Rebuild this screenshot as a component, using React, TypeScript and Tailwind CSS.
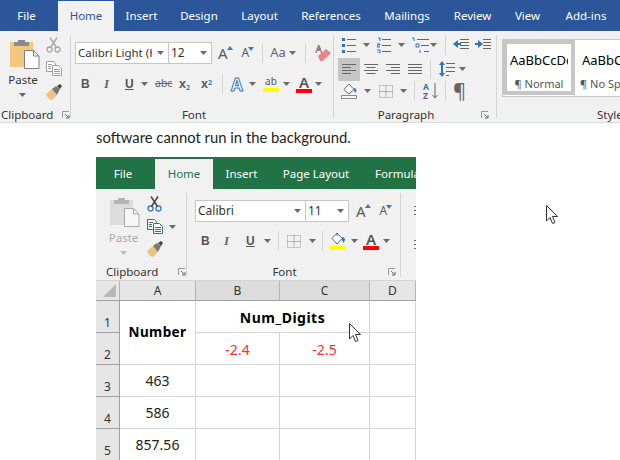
import React from "react";

type C = { className?: string };
const Caret = ({ className = "" }: C) => (
  <svg width="7" height="4" className={"shrink-0 " + className}><path d="M0 0h7L3.5 4z" fill="#6a6a6a" /></svg>
);
const Launcher = ({ className = "" }: C) => (
  <svg width="8" height="8" className={"shrink-0 " + className} fill="none">
    <path d="M.5 7V.5H7" stroke="#999" />
    <path d="M3 3l3.5 3.5M7 4v3H4" stroke="#666" />
  </svg>
);
const Sep = ({ className = "" }: C) => <div className={"w-px bg-[#d4d4d4] shrink-0 " + className} />;

const ClipIcon = ({ gray = false }: { gray?: boolean }) => (
  <svg width="30" height="30" className="block">
    <path d="M0 3h23v25H0z" fill={gray ? "#dcdcdc" : "#f0c880"} />
    <path d="M8 3V1h7v2h4v4H4V3z" fill={gray ? "#b4b4b4" : "#8a8a8a"} />
    <path d="M14.5 11.5h9l5.500 5.500V29.500h-14.500z" fill={gray ? "#f6f6f6" : "#fff"} stroke={gray ? "#a8a8a8" : "#808080"} />
    <path d="M23.500 11.500v5.500h5.500" fill="none" stroke={gray ? "#a8a8a8" : "#808080"} />
  </svg>
);
const Scissors = ({ color }: { color: string }) => (
  <svg width="15" height="16" fill="none" className="block">
    <circle cx="3.500" cy="12.500" r="2.500" stroke={color} strokeWidth="1.300" />
    <circle cx="11.500" cy="12.500" r="2.500" stroke={color} strokeWidth="1.300" />
    <path d="M4.500 10.500L11 .5M10.500 10.500L4 .5" stroke={color === "#3b79b8" ? "#444" : "#aaa"} strokeWidth="1.500" />
  </svg>
);
const Copy = ({ color = "#777" }: { color?: string }) => (
  <svg width="16" height="15" fill="none" className="block">
    <path d="M.5.5h7l2 2v8h-9z" fill="#fff" stroke={color} />
    <path d="M6.500 4.500h6l3 3v7h-9z" fill="#fff" stroke={color} />
    <path d="M8 8.500h6M8 10.500h6M8 12.500h6M2 3.500h4M2 5.500h3M2 7.500h3" stroke={color} />
  </svg>
);
const Brush = () => (
  <svg width="16" height="16" className="block">
    <path d="M0 10l6-5 5 6-5 5c-2 0-5-3-6-6z" fill="#edc27d" />
    <path d="M6 5l4-3 4 3-3 6z" fill="#777" />
    <path d="M11 2l3-2 2 2-2 3z" fill="#444" />
  </svg>
);
const Lines = ({ kind }: { kind: "l" | "c" | "r" | "j" }) => {
  const d = {
    l: "M0 .5h14M0 3.500h9M0 6.500h14M0 9.500h9",
    c: "M0 .5h14M2.500 3.500h9M0 6.500h14M2.500 9.500h9",
    r: "M0 .5h14M5 3.500h9M0 6.500h14M5 9.500h9",
    j: "M0 .5h14M0 3.500h14M0 6.500h14M0 9.500h14",
  }[kind];
  return <svg width="14" height="10" className="block shrink-0"><path d={d} stroke="#666" /></svg>;
};
const Borders = () => (
  <svg width="14" height="13" className="block shrink-0" fill="none">
    <path d="M.5.5h13M.5 12.500h13M.5.5v12M13.500.5v12" stroke="#999" strokeDasharray="1 1" />
    <path d="M7 .5v12M.5 6.500h13" stroke="#777" strokeDasharray="1 1" />
  </svg>
);
const Fill = ({ bar }: { bar: string }) => (
  <div className="flex flex-col items-center shrink-0 w-[16px]">
    <svg width="16" height="13" className="block">
      <path d="M7 1L2 6.500 7 12l5-5.500z" fill="#fff" stroke="#666" />
      <path d="M7 1V4" stroke="#666" />
      <path d="M12 5c2 0 3 1 3 3l-1.500 3L12 8z" fill="#3b79b8" />
    </svg>
    <div className={"w-[16px] h-[4px] mt-px " + bar} />
  </div>
);
const BigA = ({ dir, size }: { dir: "up" | "down"; size: string }) => (
  <div className="flex items-start shrink-0">
    <span className={"leading-none text-[#5a5a5a] " + size}>A</span>
    <svg width="6" height="4" className="-ml-px">
      <path d={dir === "up" ? "M0 4h6L3 0z" : "M0 0h6L3 4z"} fill="#3b79b8" />
    </svg>
  </div>
);
const ColorA = () => (
  <div className="flex flex-col items-center shrink-0 w-[16px]">
    <span className="text-[15px] leading-[14px] font-semibold text-[#555]">A</span>
    <div className="w-[16px] h-[4px] bg-[#ff0000]" />
  </div>
);
const Cursor = ({ className = "" }: C) => (
  <svg width="13" height="20" className={"absolute " + className}>
    <path d="M.5.5v15.500l3.500-3.500 2.500 6 2.500-1-2.500-6h5z" fill="#fff" stroke="#333" />
  </svg>
);
const Tab = ({ w, label, active, color }: { w: string; label: string; active?: boolean; color: string }) => (
  <div
    className={
      "flex items-center justify-center shrink-0 h-full whitespace-nowrap text-[11.500px] " +
      w +
      " " +
      (active ? "bg-[#f1f1f1] " + color : "text-white")
    }
  >
    {label}
  </div>
);
const HeadCell = ({ label, dark }: { label: string; dark?: boolean }) => (
  <div
    className={
      "flex items-center justify-center border-r border-b border-r-[#b4b4b4] border-b-[#a0a0a0] text-[12px] text-[#333] " +
      (dark ? "bg-[#dcdcdc]" : "bg-[#e6e6e6]")
    }
  >
    {label}
  </div>
);
const RowHead = ({ n }: { n: number }) => (
  <div className="flex items-end justify-center bg-[#e6e6e6] border-r border-b border-r-[#9e9e9e] border-b-[#a0a0a0] text-[12px] text-[#333]">
    {n}
  </div>
);
const Cell = ({ children, red }: { children?: React.ReactNode; red?: boolean }) => (
  <div
    className={
      "flex items-center justify-center pb-[1px] border-r border-b border-[#d4d4d4] bg-white text-[14px] " +
      (red ? "text-[#ff2a2a] pt-[3px]" : "text-[#222]")
    }
  >
    {children}
  </div>
);

const Word = () => (
  <>
    <div className="flex h-[31px] bg-[#2b579a] pt-px">
      <Tab w="w-[58px] pr-[5px]" label="File" color="" />
      <Tab w="w-[56px]" label="Home" active color="text-[#2b579a]" />
      <Tab w="w-[55px]" label="Insert" color="" />
      <Tab w="w-[60px]" label="Design" color="" />
      <Tab w="w-[61px]" label="Layout" color="" />
      <Tab w="w-[82px]" label="References" color="" />
      <Tab w="w-[70px]" label="Mailings" color="" />
      <Tab w="w-[61px]" label="Review" color="" />
      <Tab w="w-[49px]" label="View" color="" />
      <Tab w="w-[68px]" label="Add-ins" color="" />
    </div>
    <div className="flex h-[92px] bg-[#f1f1f1] border-b border-[#d5dcd8] pt-[4px] overflow-hidden">
      {/* Clipboard */}
      <div className="w-[70px] shrink-0 flex flex-col">
        <div className="h-[73px] flex">
          <div className="w-[41px] flex flex-col items-center pl-[9px] pt-[4px]">
            <ClipIcon />
            <span className="text-[11.500px] leading-[16px] mt-[3px] -ml-[4px] text-[#333]">Paste</span>
            <Caret className="mt-[5px] -ml-[6px]" />
          </div>
          <div className="ml-[5px] flex flex-col">
            <div className="mt-[2px]"><Scissors color="#a8a8a8" /></div>
            <div className="mt-[8px]"><Copy color="#a0a0a0" /></div>
            <div className="mt-[8px]"><Brush /></div>
          </div>
        </div>
        <div className="flex items-center h-[14px]">
          <span className="text-[11.500px] leading-[14px] pl-px text-[#333]">Clipboard</span>
          <Launcher className="ml-[9px]" />
        </div>
      </div>
      <Sep className="h-[83px]" />
      {/* Font */}
      <div className="w-[262px] shrink-0 flex flex-col">
        <div className="h-[73px] flex flex-col">
          <div className="flex items-center h-[22px] mt-[7px] ml-[4px]">
            <div className="w-[94px] h-[22px] bg-white border border-[#c6c6c6] flex items-center pl-[2px] pr-[4px] overflow-hidden">
              <span className="text-[11.500px] text-[#333] w-[76px] overflow-hidden whitespace-nowrap">Calibri Light (H</span>
              <Caret className="ml-[5px]" />
            </div>
            <div className="w-[43px] h-[22px] bg-white border border-l-0 border-[#c6c6c6] flex items-center justify-between pl-[2px] pr-[4px]">
              <span className="text-[12px] text-[#333]">12</span>
              <Caret />
            </div>
            <div className="ml-[6px]"><BigA dir="up" size="text-[15px]" /></div>
            <div className="ml-[9px]"><BigA dir="down" size="text-[12px]" /></div>
            <Sep className="ml-[8px] h-[20px]" />
            <span className="ml-[7px] text-[13px] text-[#666]">Aa</span>
            <Caret className="ml-[3px]" />
            <Sep className="ml-[9px] h-[20px]" />
            <svg width="16" height="18" className="ml-[9px]">
              <path d="M3 1l-3 8h1.500l.7-2h3l.7 2H7.500L4.500 1z" fill="#888" />
              <path d="M3 12l8-7 5 4-8 8H5z" fill="#e8848c" />
            </svg>
          </div>
          <div className="flex items-center h-[24px] mt-[8px]">
            <span className="ml-[10px] w-[9px] text-[12px] font-bold text-[#555] font-['Liberation_Sans']">B</span>
            <span className="ml-[14px] w-[8px] text-[13px] italic font-bold text-[#666] font-['Liberation_Serif']">I</span>
            <span className="ml-[13px] w-[10px] text-[12px] font-bold underline text-[#555] font-['Liberation_Sans']">U</span>
            <Caret className="ml-[6px]" />
            <span className="ml-[7px] w-[16px] text-[10.500px] line-through text-[#666]">abc</span>
            <span className="ml-[8px] w-[13px] text-[12px] font-bold text-[#666] whitespace-nowrap">x<sub className="text-[7px] text-[#3b79b8]">2</sub></span>
            <span className="ml-[9px] w-[13px] text-[12px] font-bold text-[#666] whitespace-nowrap">x<sup className="text-[7px] text-[#3b79b8]">2</sup></span>
            <Sep className="ml-[8px] h-[20px]" />
            <span className="ml-[8px] w-[14px] text-[17px] leading-none font-bold text-[#fff] [-webkit-text-stroke:1px_#3b79b8]">A</span>
            <Caret className="ml-[4px]" />
            <div className="ml-[7px] w-[16px] flex flex-col items-center shrink-0">
              <span className="text-[10px] leading-[11px] text-[#555]">ab</span>
              <div className="w-[16px] h-[4px] bg-[#ffff00] mt-[1px]" />
            </div>
            <Caret className="ml-[4px]" />
            <div className="ml-[6px]"><ColorA /></div>
            <Caret className="ml-[3px]" />
          </div>
        </div>
        <div className="h-[14px] flex items-center justify-center">
          <span className="text-[11.500px] leading-[14px] text-[#333] -ml-[16px]">Font</span>
        </div>
      </div>
      <Sep className="h-[83px]" />
      {/* Paragraph */}
      <div className="w-[162px] shrink-0 flex flex-col">
        <div className="h-[73px] flex flex-col">
          <div className="flex items-center h-[20px]">
            <svg width="14" height="16" className="ml-[8px]"><path d="M5 2.500h9M5 8.500h9M5 14.500h9" stroke="#666" /><path d="M0 1h3v3H0zM0 7h3v3H0zM0 13h3v3H0z" fill="#2e75b6" /></svg>
            <Caret className="ml-[7px]" />
            <svg width="14" height="16" className="ml-[7px]"><path d="M5 2.500h9M5 8.500h9M5 14.500h9" stroke="#666" /><path d="M1 1h2v3M0 7h3v1H0v2h3M0 13h3v3H0" stroke="#2e75b6" fill="none" /></svg>
            <Caret className="ml-[7px]" />
            <svg width="18" height="16" className="ml-[6px]"><path d="M6 2.500h12M10 8.500h8M13 14.500h5" stroke="#666" /><path d="M1 1h2v3M5 7h3v3H5zM9 13v3" stroke="#2e75b6" fill="none" /></svg>
            <Caret className="ml-[1px]" />
            <Sep className="ml-[8px] h-[20px]" />
            <svg width="16" height="12" className="ml-[7px]"><path d="M7 .5h9M7 3.500h9M7 6.500h9M7 9.500h9" stroke="#666" /><path d="M0 5l5-4v3h3v2H5v3z" fill="#2e75b6" /></svg>
            <svg width="16" height="12" className="ml-[6px]"><path d="M8 .5h8M8 3.500h8M8 6.500h8M8 9.500h8" stroke="#666" /><path d="M8 5L3 1v3H0v2h3v3z" fill="#2e75b6" /></svg>
          </div>
          <div className="flex items-center h-[24px] mt-[2px]">
            <div className="ml-[4px] w-[22px] h-[23px] bg-[#c6c6c6] flex items-center justify-center"><Lines kind="l" /></div>
            <div className="ml-[4px]"><Lines kind="c" /></div>
            <div className="ml-[8px]"><Lines kind="r" /></div>
            <div className="ml-[8px]"><Lines kind="j" /></div>
            <Sep className="ml-[8px] h-[20px]" />
            <svg width="16" height="16" className="ml-[8px]"><path d="M7 2.500h9M7 6.500h9M7 10.500h9M7 14.500h3" stroke="#666" /><path d="M3 0l3 4H4v8h2l-3 4-3-4h2V4H0z" fill="#2e75b6" /></svg>
            <Caret className="ml-[4px]" />
          </div>
          <div className="flex items-center h-[22px] -mt-[1px]">
            <div className="ml-[7px]"><svg width="16" height="17" className="block"><path d="M8 1L3 6.500 8 11l5-4.500z" fill="#fff" stroke="#666" /><path d="M13 5c1.500 0 2.500 1 2.500 3L14 10l-1-3z" fill="#2e75b6" /><path d="M.5 12.500h15v3H.5z" fill="#f8f8f8" stroke="#888" /></svg></div>
            <Caret className="ml-[7px]" />
            <div className="ml-[8px]"><Borders /></div>
            <Caret className="ml-[7px]" />
            <Sep className="ml-[7px] h-[20px]" />
            <div className="ml-[8px] w-[15px] h-[18px] flex relative shrink-0">
              <div className="flex flex-col w-[9px] text-[8.500px] leading-[9px] font-bold">
                <span className="text-[#2e75b6]">A</span>
                <span className="text-[#7a4f9e]">Z</span>
              </div>
              <svg width="6" height="17"><path d="M3 1v15M.5 13L3 16l2.500-3" stroke="#666" fill="none" /></svg>
            </div>
            <Sep className="ml-[7px] h-[20px]" />
            <span className="ml-[7px] text-[20px] leading-none text-[#666]">¶</span>
          </div>
        </div>
        <div className="h-[14px] flex items-center relative justify-center">
          <span className="text-[11.500px] leading-[14px] text-[#333] -ml-[18px]">Paragraph</span>
          <Launcher className="absolute right-[7px] top-[3px]" />
        </div>
      </div>
      <Sep className="h-[83px]" />
      {/* Styles */}
      <div className="flex-1 flex flex-col overflow-hidden pl-[5px]">
        <div className="h-[73px] pt-[4px]">
          <div className="w-[140px] h-[58px] bg-white border border-[#c6c6c6] border-r-0 flex">
            <div className="w-[72px] h-[55px] border-[4px] border-[#c6c6c6] shrink-0 bg-white flex flex-col items-center pt-[8px] overflow-hidden">
              <span className="self-start ml-[3px] w-[58px] text-[13px] leading-[16px] overflow-hidden whitespace-nowrap text-black">AaBbCcDc</span>
              <span className="text-[11px] leading-[14px] mt-[9px] text-[#555] whitespace-nowrap">¶ Normal</span>
            </div>
            <div className="ml-[5px] pt-[12px] flex flex-col whitespace-nowrap">
              <span className="text-[13px] leading-[16px] pl-[2px] text-black">AaBbC</span>
              <span className="text-[11px] leading-[14px] mt-[9px] text-[#555]">¶ No Sp</span>
            </div>
          </div>
        </div>
        <div className="h-[14px] pl-[95px] text-[11.500px] leading-[14px] text-[#333]">Style</div>
      </div>
    </div>
  </>
);

const Excel = () => (
  <div className="ml-[96px] w-[320px] mt-[11px] overflow-hidden bg-white">
    <div className="flex h-[32px] bg-[#217346] pt-[2px]">
      <Tab w="w-[59px] pr-[5px]" label="File" color="" />
      <Tab w="w-[58px]" label="Home" active color="text-[#217346]" />
      <Tab w="w-[57px]" label="Insert" color="" />
      <Tab w="w-[92px]" label="Page Layout" color="" />
      <Tab w="w-[54px] !justify-start pl-[13px]" label="Formula" color="" />
    </div>
    <div className="flex h-[92px] bg-[#f1f1f1] border-b border-[#d4d4d4] overflow-hidden">
      <div className="w-[90px] shrink-0 flex flex-col">
        <div className="h-[76px] flex pt-[8px]">
          <div className="ml-[14px] w-[30px] flex flex-col items-center">
            <ClipIcon gray />
            <span className="text-[11.500px] leading-[16px] mt-[3px] -ml-[3px] text-[#aaa]">Paste</span>
            <Caret className="mt-[5px] opacity-40 -ml-[4px]" />
          </div>
          <div className="ml-[7px] -mt-[1px] flex flex-col">
            <Scissors color="#3b79b8" />
            <div className="flex items-center mt-[7px]"><Copy color="#3b6ea0" /><Caret className="ml-[6px]" /></div>
            <div className="mt-[7px]"><Brush /></div>
          </div>
        </div>
        <div className="flex items-center h-[16px]">
          <span className="ml-[10px] text-[11.500px] leading-[16px] text-[#333]">Clipboard</span>
          <Launcher className="ml-[20px]" />
        </div>
      </div>
      <Sep className="h-[84px] mt-[4px]" />
      <div className="w-[213px] shrink-0 flex flex-col">
        <div className="h-[76px] flex flex-col">
          <div className="flex items-center h-[22px] mt-[11px] ml-[8px]">
            <div className="w-[111px] h-[22px] bg-white border border-[#c6c6c6] flex items-center justify-between pl-[2px] pr-[4px]">
              <span className="text-[12px] text-[#333]">Calibri</span>
              <Caret />
            </div>
            <div className="w-[43px] h-[22px] bg-white border border-l-0 border-[#c6c6c6] flex items-center justify-between pl-[2px] pr-[4px]">
              <span className="text-[12px] text-[#333]">11</span>
              <Caret />
            </div>
            <div className="ml-[7px]"><BigA dir="up" size="text-[15px]" /></div>
            <div className="ml-[9px]"><BigA dir="down" size="text-[12px]" /></div>
          </div>
          <div className="flex items-center h-[24px] mt-[7px]">
            <span className="ml-[14px] w-[9px] text-[12px] font-bold text-[#555] font-['Liberation_Sans']">B</span>
            <span className="ml-[14px] w-[8px] text-[13px] italic font-bold text-[#666] font-['Liberation_Serif']">I</span>
            <span className="ml-[14px] w-[10px] text-[12px] font-bold underline text-[#555] font-['Liberation_Sans']">U</span>
            <Caret className="ml-[8px]" />
            <Sep className="ml-[7px] h-[20px]" />
            <div className="ml-[8px]"><Borders /></div>
            <Caret className="ml-[8px]" />
            <Sep className="ml-[6px] h-[20px]" />
            <div className="ml-[7px]"><Fill bar="bg-[#ffff00]" /></div>
            <Caret className="ml-[5px]" />
            <div className="ml-[5px]"><ColorA /></div>
            <Caret className="ml-[4px]" />
          </div>
        </div>
        <div className="h-[16px] flex items-center relative justify-center">
          <span className="text-[11.500px] leading-[16px] text-[#333] -ml-[18px]">Font</span>
          <Launcher className="absolute right-[4px] top-[4px]" />
        </div>
      </div>
      <Sep className="h-[84px] mt-[4px]" />
      <div className="flex-1 flex flex-col pl-[13px] pt-[17px] gap-[25px]">
        <svg width="3" height="9"><path d="M0 .5h3M0 4.500h3M0 8.500h3" stroke="#666" /></svg>
        <svg width="3" height="9"><path d="M0 .5h3M0 4.500h3M0 8.500h3" stroke="#666" /></svg>
      </div>
    </div>
    <div className="relative grid grid-cols-[24px_76px_84px_90px_46px] grid-rows-[20px_32px_32px_32px_32px_32px]">
      <div className="bg-[#e6e6e6] border-r border-b border-r-[#b4b4b4] border-b-[#a0a0a0] flex items-end justify-end pr-[3px] pb-[3px]">
        <svg width="13" height="13"><path d="M13 0v13H0z" fill="#b8b8b8" /></svg>
      </div>
      <HeadCell label="A" />
      <HeadCell label="B" dark />
      <HeadCell label="C" dark />
      <HeadCell label="D" />

      <RowHead n={1} />
      <div className="row-span-2 flex items-center justify-center border-r border-b border-[#d4d4d4] bg-white text-[13.500px] font-bold tracking-[0.4px] text-black">Number</div>
      <div className="col-span-2 flex items-center justify-center pt-[1px] border-r border-b border-[#d4d4d4] bg-white text-[14px] font-bold tracking-[0.5px] text-black">Num_Digits</div>
      <Cell />

      <RowHead n={2} />
      <Cell red>-2.4</Cell>
      <Cell red>-2.5</Cell>
      <Cell />

      <RowHead n={3} />
      <Cell>463</Cell>
      <Cell />
      <Cell />
      <Cell />

      <RowHead n={4} />
      <Cell>586</Cell>
      <Cell />
      <Cell />
      <Cell />

      <RowHead n={5} />
      <Cell>857.56</Cell>
      <Cell />
      <Cell />
      <Cell />
    </div>
  </div>
);

export default function App() {
  return (
    <div className="relative w-[620px] h-[460px] overflow-hidden bg-white font-['Noto_Sans',sans-serif]">
      <Word />
      <div className="ml-[96px] mt-[5px] h-[18px] text-[14.800px] leading-[18px] text-[#222] whitespace-nowrap font-['Lato',sans-serif]">
        software cannot run in the background.
      </div>
      <Excel />
      <Cursor className="left-[546px] top-[205px]" />
      <Cursor className="left-[349px] top-[323px]" />
    </div>
  );
}
